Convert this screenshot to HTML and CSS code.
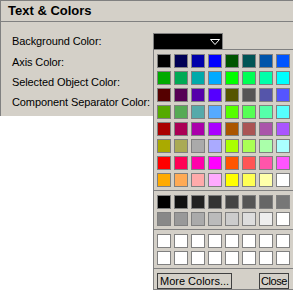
FILE: index.html
```html
<!DOCTYPE html>
<html>
<head>
<meta charset="utf-8">
<link rel="stylesheet" href="styles.css">
</head>
<body>
<div class="panel">
  <div class="panel-header">Text &amp; Colors</div>
  <div class="panel-body">
    <div class="field-row">
      <span class="field-label">Background Color:</span>
      <div class="picker">
        <div class="picker-button">
          <svg class="picker-arrow" width="10" height="6" viewBox="0 0 10 6"><polygon points="0.5,0.5 9.5,0.5 5,5.5" fill="none" stroke="#ffffff" stroke-width="1"/></svg>
        </div>
        <div class="palette">
          <div class="swatch-grid">
            <div class="swatch" style="background:#000000"></div><div class="swatch" style="background:#000055"></div><div class="swatch" style="background:#0000aa"></div><div class="swatch" style="background:#0000ff"></div><div class="swatch" style="background:#005500"></div><div class="swatch" style="background:#005555"></div><div class="swatch" style="background:#0055aa"></div><div class="swatch" style="background:#0055ff"></div>
            <div class="swatch" style="background:#00aa00"></div><div class="swatch" style="background:#00aa55"></div><div class="swatch" style="background:#00aaaa"></div><div class="swatch" style="background:#00aaff"></div><div class="swatch" style="background:#00ff00"></div><div class="swatch" style="background:#00ff55"></div><div class="swatch" style="background:#00ffaa"></div><div class="swatch" style="background:#00ffff"></div>
            <div class="swatch" style="background:#550000"></div><div class="swatch" style="background:#550055"></div><div class="swatch" style="background:#5500aa"></div><div class="swatch" style="background:#5500ff"></div><div class="swatch" style="background:#555500"></div><div class="swatch" style="background:#555555"></div><div class="swatch" style="background:#5555aa"></div><div class="swatch" style="background:#5555ff"></div>
            <div class="swatch" style="background:#55aa00"></div><div class="swatch" style="background:#55aa55"></div><div class="swatch" style="background:#55aaaa"></div><div class="swatch" style="background:#55aaff"></div><div class="swatch" style="background:#55ff00"></div><div class="swatch" style="background:#55ff55"></div><div class="swatch" style="background:#55ffaa"></div><div class="swatch" style="background:#55ffff"></div>
            <div class="swatch" style="background:#aa0000"></div><div class="swatch" style="background:#aa0055"></div><div class="swatch" style="background:#aa00aa"></div><div class="swatch" style="background:#aa00ff"></div><div class="swatch" style="background:#aa5500"></div><div class="swatch" style="background:#aa5555"></div><div class="swatch" style="background:#aa55aa"></div><div class="swatch" style="background:#aa55ff"></div>
            <div class="swatch" style="background:#aaaa00"></div><div class="swatch" style="background:#aaaa55"></div><div class="swatch" style="background:#aaaaaa"></div><div class="swatch" style="background:#aaaaff"></div><div class="swatch" style="background:#aaff00"></div><div class="swatch" style="background:#aaff55"></div><div class="swatch" style="background:#aaffaa"></div><div class="swatch" style="background:#aaffff"></div>
            <div class="swatch" style="background:#ff0000"></div><div class="swatch" style="background:#ff0055"></div><div class="swatch" style="background:#ff00aa"></div><div class="swatch" style="background:#ff00ff"></div><div class="swatch" style="background:#ff5500"></div><div class="swatch" style="background:#ff5555"></div><div class="swatch" style="background:#ff55aa"></div><div class="swatch" style="background:#ff55ff"></div>
            <div class="swatch" style="background:#ffaa00"></div><div class="swatch" style="background:#ffaa55"></div><div class="swatch" style="background:#ffaaaa"></div><div class="swatch" style="background:#ffaaff"></div><div class="swatch" style="background:#ffff00"></div><div class="swatch" style="background:#ffff55"></div><div class="swatch" style="background:#ffffaa"></div><div class="swatch" style="background:#ffffff"></div>
          </div>
          <div class="palette-sep"></div>
          <div class="swatch-grid">
            <div class="swatch" style="background:#000000"></div><div class="swatch" style="background:#111111"></div><div class="swatch" style="background:#222222"></div><div class="swatch" style="background:#333333"></div><div class="swatch" style="background:#444444"></div><div class="swatch" style="background:#555555"></div><div class="swatch" style="background:#666666"></div><div class="swatch" style="background:#777777"></div>
            <div class="swatch" style="background:#888888"></div><div class="swatch" style="background:#999999"></div><div class="swatch" style="background:#aaaaaa"></div><div class="swatch" style="background:#bbbbbb"></div><div class="swatch" style="background:#cccccc"></div><div class="swatch" style="background:#dddddd"></div><div class="swatch" style="background:#eeeeee"></div><div class="swatch" style="background:#ffffff"></div>
          </div>
          <div class="palette-sep"></div>
          <div class="swatch-grid">
            <div class="swatch swatch-empty"></div><div class="swatch swatch-empty"></div><div class="swatch swatch-empty"></div><div class="swatch swatch-empty"></div><div class="swatch swatch-empty"></div><div class="swatch swatch-empty"></div><div class="swatch swatch-empty"></div><div class="swatch swatch-empty"></div>
            <div class="swatch swatch-empty"></div><div class="swatch swatch-empty"></div><div class="swatch swatch-empty"></div><div class="swatch swatch-empty"></div><div class="swatch swatch-empty"></div><div class="swatch swatch-empty"></div><div class="swatch swatch-empty"></div><div class="swatch swatch-empty"></div>
          </div>
          <div class="palette-sep"></div>
          <div class="palette-actions">
            <button class="palette-btn">More Colors...</button>
            <button class="palette-btn palette-btn-close">Close</button>
          </div>
        </div>
      </div>
    </div>
    <div class="field-row"><span class="field-label">Axis Color:</span></div>
    <div class="field-row"><span class="field-label">Selected Object Color:</span></div>
    <div class="field-row"><span class="field-label">Component Separator Color:</span></div>
  </div>
</div>
</body>
</html>
```

FILE: styles.css
```css
html {
  background: #ffffff;
}

body {
  margin: 0;
  padding: 0;
  width: 293px;
  height: 295px;
  overflow: hidden;
  font-family: "Liberation Sans", Arial, sans-serif;
  font-size: 11px;
  color: #000000;
}

.panel {
  background: #d4d0c8;
  border-left: 1px solid #808080;
  border-top: 1px solid #808080;
}

.panel-header {
  height: 20px;
  line-height: 20px;
  padding-left: 7px;
  font-size: 13px;
  font-weight: bold;
  border-bottom: 1px solid #808080;
}

.panel-body {
  padding: 9px 0 4px 11px;
}

.field-row {
  display: grid;
  grid-template-columns: 141px auto;
  align-items: center;
  height: 20px;
}

.field-row:first-child {
  margin-bottom: 1px;
}

.field-label {
  line-height: 20px;
  white-space: nowrap;
  letter-spacing: -0.1px;
}

.picker {
  position: relative;
  width: 70px;
  height: 17px;
}

.picker-button {
  box-sizing: border-box;
  width: 70px;
  height: 17px;
  background: #000000;
  border: 1px solid #808080;
  display: flex;
  align-items: center;
  justify-content: flex-end;
  padding-right: 2px;
}

.picker-arrow {
  display: block;
  margin-top: 1px;
}

.palette {
  position: absolute;
  left: 0;
  top: 16px;
  width: 133px;
  padding: 4px 3px 0 3px;
  background: #d4d0c8;
  border: 1px solid #808080;
  z-index: 2;
}

.swatch-grid {
  display: grid;
  grid-template-columns: repeat(8, 14px);
  grid-auto-rows: 14px;
  gap: 3px;
}

.swatch {
  box-sizing: border-box;
  width: 14px;
  height: 14px;
  border: 1px solid #808080;
}

.swatch-empty {
  background: #ffffff;
}

.palette-sep {
  height: 1px;
  background: #808080;
  margin: 3px -3px 4px -3px;
}

.palette-actions {
  display: flex;
  justify-content: space-between;
  align-items: flex-start;
  height: 16px;
}

.palette-btn {
  box-sizing: border-box;
  height: 16px;
  margin: 0;
  padding: 0 2px 0 2px;
  font-family: "Liberation Sans", Arial, sans-serif;
  font-size: 11px;
  line-height: 14px;
  color: #000000;
  background: #d4d0c8;
  border: 1px solid #404040;
  border-radius: 0;
}

.palette-btn-close {
  margin-right: 1px;
  padding: 0 1px;
  letter-spacing: -0.4px;
}
```
